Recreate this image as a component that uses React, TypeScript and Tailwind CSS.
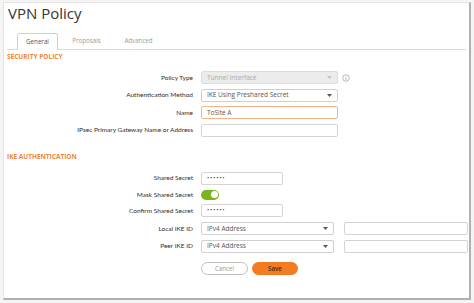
import type { ReactNode } from 'react'

const font = { fontFamily: '"Open Sans", "Liberation Sans", sans-serif' }
const labelFont = { fontFamily: 'Lato, "Open Sans", sans-serif' }

function Caret({ muted }: { muted?: boolean }) {
  return (
    <svg width="5" height="3" viewBox="0 0 5 3" className="shrink-0">
      <path d="M0 0h5L2.5 3z" fill={muted ? '#c4c4c4' : '#555'} />
    </svg>
  )
}

function Select({ value, width, muted }: { value: string; width: string; muted?: boolean }) {
  return (
    <div
      className={`flex h-[13px] ${width} items-center justify-between rounded-[2px] border pl-[5px] pr-[5px] text-[6.5px] ${
        muted ? 'border-[#dcdcdc] bg-[#ececec] text-[#a9a9a9]' : 'border-[#cfcfcf] bg-white text-[#555]'
      }`}
    >
      <span>{value}</span>
      <Caret muted={muted} />
    </div>
  )
}

function Input({ value, width, accent }: { value?: string; width: string; accent?: boolean }) {
  return (
    <div
      className={`flex h-[13px] ${width} items-center rounded-[2px] border bg-white pl-[5px] text-[6.5px] text-[#555] ${
        accent ? 'border-[#f2b48a]' : 'border-[#d4d4d4]'
      }`}
    >
      {value}
    </div>
  )
}

function Dots() {
  return <span className="tracking-[0.8px] text-[6px] text-[#444]">••••••</span>
}

function Row({ label, children, h = 'h-[13px]' }: { label: string; children: ReactNode; h?: string }) {
  return (
    <div className={`grid ${h} grid-cols-[186px_1fr] items-center gap-x-[8px]`}>
      <span className="text-right text-[6.5px] font-normal text-[#2e2e2e]" style={labelFont}>
        {label}
      </span>
      <div className="flex items-center gap-[10px]">{children}</div>
    </div>
  )
}

export default function App() {
  return (
    <div className="h-[303px] w-[474px] bg-[#f4f4f4] pl-[3px] pt-[2px]" style={font}>
      <div className="flex h-[298px] w-[468px] flex-col border-l border-t border-[#e4e4e4] border-r-2 border-b-2 border-r-[#b0b0b0] border-b-[#b0b0b0] bg-white px-[3px]">
        <h1 className="mt-[1px] pl-[1px] text-[15px] leading-[18px] font-normal text-[#333]">VPN Policy</h1>

        <div className="mt-[11px] flex h-[17px] items-end border-b border-[#f7d2b4] pl-[10px]">
          <div className="-mb-px flex h-[17px] w-[41px] items-center justify-center rounded-t-[2px] border border-b-0 border-[#f3c7a4] bg-white text-[6.2px] text-[#555]">
            General
          </div>
          <div className="flex h-[17px] w-[50px] items-center justify-center pl-[7px] text-[6.2px] text-[#9a9a9a]">Proposals</div>
          <div className="flex h-[17px] w-[56px] items-center justify-center pl-[5px] text-[6.2px] text-[#9a9a9a]">Advanced</div>
        </div>

        <div className="mt-[4px] h-[6px] text-[6.5px] leading-[6px] font-bold text-[#f0873a]">SECURITY POLICY</div>

        <div className="mt-[11px] flex flex-col gap-[4.6px]">
          <Row label="Policy Type">
            <Select value="Tunnel Interface" width="w-[137px]" muted />
            <svg width="8" height="8" viewBox="0 0 8 8" className="-ml-[6px]">
              <circle cx="4" cy="4" r="3.3" fill="none" stroke="#9a9a9a" strokeWidth="0.7" />
              <path d="M4 3.4v2.4M4 2.2v0.5" stroke="#9a9a9a" strokeWidth="0.8" />
            </svg>
          </Row>
          <Row label="Authentication Method">
            <Select value="IKE Using Preshared Secret" width="w-[137px]" />
          </Row>
          <Row label="Name">
            <Input value="ToSite A" width="w-[137px]" accent />
          </Row>
          <Row label="IPsec Primary Gateway Name or Address">
            <Input width="w-[137px]" />
          </Row>
        </div>

        <div className="mt-[17px] h-[6px] text-[6.5px] leading-[6px] font-bold text-[#f0873a]">IKE AUTHENTICATION</div>

        <div className="mt-[12px] flex flex-col gap-[4.6px]">
          <Row label="Shared Secret">
            <div className="flex h-[13px] w-[82px] items-center rounded-[2px] border border-[#d4d4d4] bg-white pl-[5px]">
              <Dots />
            </div>
          </Row>
          <Row label="Mask Shared Secret" h="h-[10.5px]">
            <div className="flex h-[10px] w-[18px] items-center justify-end rounded-full bg-[#7db41e] pr-[1.5px]">
              <div className="h-[7px] w-[7px] rounded-full bg-white" />
            </div>
          </Row>
          <Row label="Confirm Shared Secret">
            <div className="flex h-[13px] w-[82px] items-center rounded-[2px] border border-[#d4d4d4] bg-white pl-[5px]">
              <Dots />
            </div>
          </Row>
          <Row label="Local IKE ID">
            <Select value="IPv4 Address" width="w-[133px]" />
            <Input width="w-[124px]" />
          </Row>
          <Row label="Peer IKE ID">
            <Select value="IPv4 Address" width="w-[133px]" />
            <Input width="w-[124px]" />
          </Row>
        </div>

        <div className="mt-[9px] grid grid-cols-[186px_1fr] gap-x-[8px]">
          <span />
          <div className="flex gap-[4px]">
            <button className="flex h-[13.5px] w-[47px] items-center justify-center rounded-full border border-[#bdbdbd] bg-white text-[6.2px] text-[#9a9a9a]">
              Cancel
            </button>
            <button className="flex h-[13.5px] w-[46px] items-center justify-center rounded-full bg-[#f47b22] text-[6.2px] font-semibold text-[#4a2810]">
              Save
            </button>
          </div>
        </div>
      </div>
    </div>
  )
}
